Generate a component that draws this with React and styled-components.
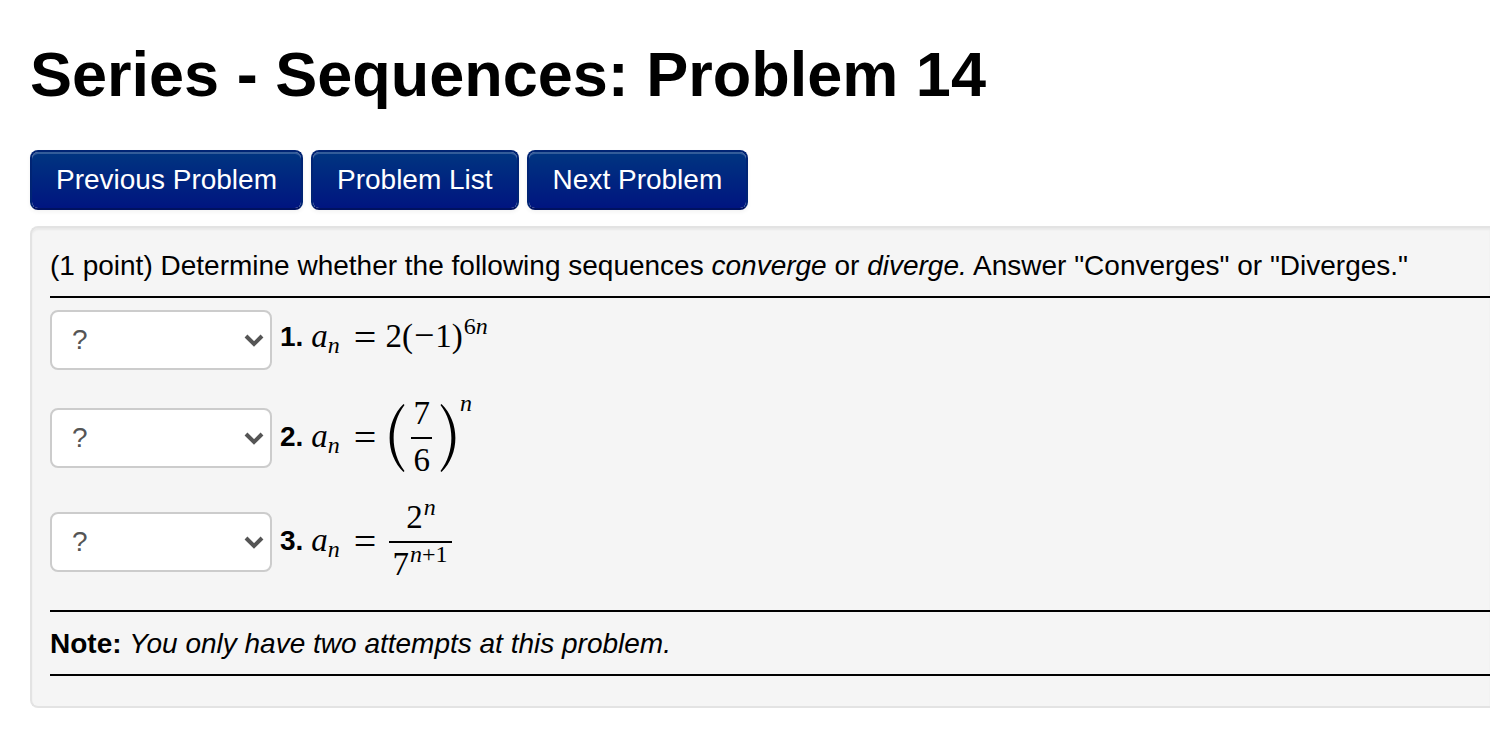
import React from 'react';
import styled, { createGlobalStyle } from 'styled-components';

const GlobalStyle = createGlobalStyle`
  * {
    box-sizing: border-box;
  }

  body {
    margin: 0;
    background: #fff;
    color: #000;
    font-family: "Liberation Sans", Arial, sans-serif;
    font-size: 28px;
    line-height: 40px;
  }
`;

const Page = styled.main`
  padding: 34px 0 24px 30px;
  overflow: hidden;
`;

const Title = styled.h1`
  margin: 0;
  font-size: 63px;
  line-height: 80px;
  font-weight: bold;
`;

const Nav = styled.nav`
  display: flex;
  gap: 8px;
  margin: 36px 0 16px;
`;

const NavButton = styled.button`
  height: 60px;
  padding: 0 24px;
  border: 2px solid #002474;
  border-bottom-color: #001260;
  border-radius: 8px;
  background: linear-gradient(#003580, #001580) padding-box;
  box-shadow: inset 0 2px 0 rgba(255, 255, 255, 0.2), 0 2px 4px rgba(0, 0, 0, 0.05);
  color: #fff;
  font: inherit;
  cursor: pointer;
`;

const Problem = styled.section`
  padding: 18px 0 30px 18px;
  border: 2px solid #e3e3e3;
  border-right: none;
  border-radius: 8px 0 0 8px;
  background: #f5f5f5;
  box-shadow: inset 0 2px 2px rgba(0, 0, 0, 0.05);
`;

const Text = styled.p`
  margin: 0;
  white-space: nowrap;
`;

const Rule = styled.hr`
  height: 2px;
  margin: ${({ $space }) => $space || '10px 0 12px'};
  border: none;
  background: #000;
`;

const Row = styled.div`
  display: flex;
  align-items: center;
  gap: 8px;
  height: ${({ $height }) => $height};
`;

const SelectWrapper = styled.div`
  display: grid;
  width: 222px;
  align-items: center;

  > * {
    grid-area: 1 / 1;
  }

  svg {
    justify-self: end;
    margin-right: 8px;
    pointer-events: none;
  }
`;

const Select = styled.select`
  width: 100%;
  height: 60px;
  padding: 0 20px;
  border: 2px solid #ccc;
  border-radius: 8px;
  background: #fff;
  color: #555;
  font: inherit;
  appearance: none;
`;

const Label = styled.label`
  display: flex;
  align-items: center;
  gap: 8px;
  padding-bottom: ${({ $raised }) => ($raised ? '4px' : '0')};
`;

const Number = styled.b`
  padding-bottom: 3px;
`;

const Formula = styled.span`
  display: flex;
  align-items: center;
  font-family: "Liberation Serif", "Times New Roman", serif;
  font-size: 33px;
`;

const Term = styled.span`
  padding-bottom: 4px;
`;

const Sup = styled.sup`
  margin-left: 1px;
  font-size: 24px;
  line-height: 0;
  vertical-align: 13px;
`;

// exponent of a tall bracketed group, sits at the top of the brackets
const TallSup = styled.sup`
  align-self: flex-start;
  margin-left: 4px;
  font-size: 24px;
  line-height: 16px;
`;

const Sub = styled.sub`
  font-size: 24px;
  line-height: 0;
  vertical-align: -6px;
`;

const Minus = styled.span`
  margin: 0 1px;
  font-size: 36px;
  line-height: 0;
`;

const Equals = styled.span`
  margin: 0 9px 0 14px;
  font-size: 40px;
`;

const Fraction = styled.span`
  display: flex;
  flex-direction: column;
  margin-left: 4px;
  text-align: center;
`;

const Numerator = styled.span`
  padding: 0 2px 6px;
  border-bottom: 2px solid #000;
  line-height: 36px;
`;

const Denominator = styled.span`
  padding: 0 ${({ $wide }) => ($wide ? '5px 0 3px' : '2px')};
  line-height: 43px;
`;

const Paren = styled.svg`
  width: 16px;
  height: 70px;
  margin: ${({ $flip }) => ($flip ? '0 0 0 8px' : '0 2px 0 4px')};
  transform: ${({ $flip }) => ($flip ? 'scaleX(-1)' : 'none')};
`;

const BigParen = ({ $flip }) => (
  <Paren viewBox="0 0 16 70" $flip={$flip} aria-hidden="true">
    <path d="M14.5 1C-4 19-4 51 14.5 69L15.5 68C1 49 1 21 15.5 2Z" />
  </Paren>
);

const Sequence = ({ number, height, raised, children }) => (
  <Row $height={height}>
    <SelectWrapper>
      <Select id={`answer${number}`} defaultValue="?">
        <option>?</option>
        <option>Converges</option>
        <option>Diverges</option>
      </Select>
      <svg width="20" height="14" viewBox="0 0 20 14" aria-hidden="true">
        <path d="M2 3L10 11L18 3" fill="none" stroke="#555" strokeWidth="4" />
      </svg>
    </SelectWrapper>
    <Label htmlFor={`answer${number}`} $raised={raised}>
      <Number>{`${number}.`}</Number>
      <Formula>
        <Term>
          <i>a</i>
          <Sub><i>n</i></Sub>
        </Term>
        <Equals>=</Equals>
        {children}
      </Formula>
    </Label>
  </Row>
);

const App = () => (
  <>
    <GlobalStyle />
    <Page>
      <Title>Series - Sequences: Problem 14</Title>
      <Nav>
        <NavButton type="button">Previous Problem</NavButton>
        <NavButton type="button">Problem List</NavButton>
        <NavButton type="button">Next Problem</NavButton>
      </Nav>
      <Problem>
        <Text>
          (1 point) Determine whether the following sequences <i>converge</i> or <i>diverge.</i>
          {' Answer "Converges" or "Diverges."'}
        </Text>
        <Rule />
        <Sequence number={1} height="60px" raised>
          <Term>
            2(
            <Minus>−</Minus>
            1)
            <Sup>6<i>n</i></Sup>
          </Term>
        </Sequence>
        <Sequence number={2} height="136px">
          <BigParen />
          <Fraction>
            <Numerator>7</Numerator>
            <Denominator>6</Denominator>
          </Fraction>
          <BigParen $flip />
          <TallSup><i>n</i></TallSup>
        </Sequence>
        <Sequence number={3} height="72px">
          <Fraction>
            <Numerator>
              2
              <Sup><i>n</i></Sup>
            </Numerator>
            <Denominator $wide>
              7
              <Sup><i>n</i>+1</Sup>
            </Denominator>
          </Fraction>
        </Sequence>
        <Rule $space="32px 0 12px" />
        <Text><b>Note:</b> <i>You only have two attempts at this problem.</i></Text>
        <Rule $space="10px 0 0" />
      </Problem>
    </Page>
  </>
);

export default App;
